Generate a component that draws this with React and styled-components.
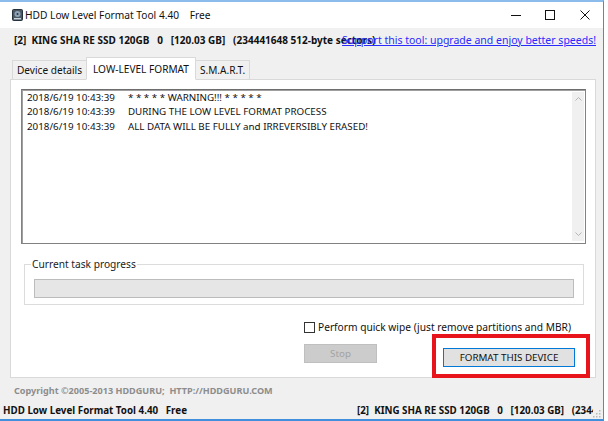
import React, { useState } from 'react';
import styled, { createGlobalStyle } from 'styled-components';

const GlobalStyle = createGlobalStyle`
  *, *::before, *::after {
    box-sizing: border-box;
  }
  body {
    margin: 0;
    background: #ffffff;
    font-family: 'Noto Sans', 'Open Sans', sans-serif;
  }
`;

const logLines = [
  ['2018/6/19 10:43:39', '* * * * *  WARNING!!! * * * * *'],
  ['2018/6/19 10:43:39', 'DURING THE LOW LEVEL FORMAT PROCESS'],
  ['2018/6/19 10:43:39', 'ALL DATA WILL BE FULLY and IRREVERSIBLY ERASED!'],
];

const deviceText = '[2]\u00a0\u00a0KING SHA RE SSD 120GB\u00a0\u00a0\u00a00\u00a0\u00a0\u00a0[120.03 GB]\u00a0\u00a0\u00a0(234441648 512-byte sectors)';

const DiskIcon = () => (
  <svg width="11" height="12" viewBox="0 0 11 12">
    <rect x="0.5" y="0.5" width="10" height="11" rx="1" fill="#4a5866" stroke="#27313b" />
    <circle cx="5.5" cy="5" r="3" fill="#8fa3b5" />
    <circle cx="5.5" cy="5" r="1" fill="#27313b" />
    <rect x="2" y="9" width="7" height="1.4" fill="#c9d3dc" />
  </svg>
);

const App = () => {
  const [tab, setTab] = useState('format');
  const [quick, setQuick] = useState(false);

  return (
    <>
      <GlobalStyle />
      <Window>
        <TitleBar>
          <DiskIcon />
          <Title>HDD Low Level Format Tool 4.40&nbsp;&nbsp;&nbsp;&nbsp;Free</Title>
          <Controls>
            <CtrlButton $w={34} aria-label="minimize">
              <svg width="10" height="10" viewBox="0 0 10 10"><path d="M0 5.5h10" stroke="#111" /></svg>
            </CtrlButton>
            <CtrlButton $w={34} aria-label="maximize">
              <svg width="10" height="10" viewBox="0 0 10 10"><rect x="0.5" y="0.5" width="9" height="9" fill="none" stroke="#111" /></svg>
            </CtrlButton>
            <CtrlButton $w={36} aria-label="close">
              <svg width="10" height="10" viewBox="0 0 10 10"><path d="M0.5 0.5l9 9M9.5 0.5l-9 9" stroke="#111" /></svg>
            </CtrlButton>
          </Controls>
        </TitleBar>

        <Body>
          <DeviceRow>
            <DeviceName>{deviceText}</DeviceName>
            <Upgrade href="#">Support this tool: upgrade and enjoy better speeds!</Upgrade>
          </DeviceRow>

          <Tabs>
            <Tab $active={tab === 'details'} onClick={() => setTab('details')}>Device details</Tab>
            <Tab $active={tab === 'format'} onClick={() => setTab('format')}>LOW-LEVEL FORMAT</Tab>
            <Tab $active={tab === 'smart'} onClick={() => setTab('smart')}>S.M.A.R.T.</Tab>
          </Tabs>

          <Panel>
            <LogBox>
              <LogList>
                {logLines.map(([time, msg], i) => (
                  <LogLine key={i}>
                    <span>{time}</span>
                    <span>{msg}</span>
                  </LogLine>
                ))}
              </LogList>
              <ScrollBar>
                <Arrow>
                  <svg width="7" height="5" viewBox="0 0 7 5"><path d="M0.5 4.5l3-3 3 3" stroke="#b5b5b5" fill="none" /></svg>
                </Arrow>
                <Arrow>
                  <svg width="7" height="5" viewBox="0 0 7 5"><path d="M0.5 0.5l3 3 3-3" stroke="#b5b5b5" fill="none" /></svg>
                </Arrow>
              </ScrollBar>
            </LogBox>

            <Group>
              <Legend>Current task progress</Legend>
              <Progress />
            </Group>

            <Actions>
              <CheckRow>
                <Check type="checkbox" checked={quick} onChange={(e) => setQuick(e.target.checked)} />
                Perform quick wipe (just remove partitions and MBR)
              </CheckRow>
              <ButtonRow>
                <Button disabled $w={73}>Stop</Button>
                <Highlight>
                  <Button $primary $w={132}>FORMAT THIS DEVICE</Button>
                </Highlight>
              </ButtonRow>
            </Actions>
          </Panel>

          <Copyright>Copyright ©2005-2013 HDDGURU;&nbsp;&nbsp;HTTP://HDDGURU.COM</Copyright>
        </Body>

        <StatusBar>
          <StatusLeft>HDD Low Level Format Tool 4.40&nbsp;&nbsp;&nbsp;Free</StatusLeft>
          <StatusRight>{deviceText}</StatusRight>
          <Grip>
            <svg width="8" height="8" viewBox="0 0 8 8">
              <g fill="#b9b9b9">
                <rect x="6" y="0" width="1.5" height="1.5" />
                <rect x="3" y="3" width="1.5" height="1.5" />
                <rect x="6" y="3" width="1.5" height="1.5" />
                <rect x="0" y="6" width="1.5" height="1.5" />
                <rect x="3" y="6" width="1.5" height="1.5" />
                <rect x="6" y="6" width="1.5" height="1.5" />
              </g>
            </svg>
          </Grip>
        </StatusBar>
      </Window>
    </>
  );
};

// Styled-components
const Window = styled.div`
  width: 604px;
  height: 421px;
  border-top: 2px solid #8cbcec;
  border-right: 1px solid #3f8fdc;
  border-bottom: 2px solid #3f8fdc;
  display: flex;
  flex-direction: column;
  background: #f0f0f0;
  overflow: hidden;
`;

const TitleBar = styled.div`
  height: 26px;
  flex-shrink: 0;
  display: flex;
  align-items: center;
  gap: 2px;
  padding-left: 12px;
  background: #ffffff;
`;

const Title = styled.span`
  font-size: 10.2px;
  color: #111;
  flex: 1;
  white-space: nowrap;
`;

const Controls = styled.div`
  display: flex;
  height: 100%;
`;

const CtrlButton = styled.div`
  width: ${(p) => p.$w}px;
  display: flex;
  align-items: center;
  justify-content: center;
`;

const Body = styled.div`
  flex: 1;
  display: flex;
  flex-direction: column;
  padding: 0 7px 0 10px;
`;

const DeviceRow = styled.div`
  display: grid;
  height: 24px;
  flex-shrink: 0;
  align-items: center;
  padding-left: 4px;
  white-space: nowrap;

  & > * {
    grid-area: 1 / 1;
  }
`;

const DeviceName = styled.span`
  font-size: 10px;
  font-weight: bold;
  color: #111;
`;

const Upgrade = styled.a`
  justify-self: end;
  color: #2a2aff;
  text-decoration: underline;
  font-size: 10.5px;
`;

const Tabs = styled.div`
  display: flex;
  align-items: flex-end;
  height: 28px;
  flex-shrink: 0;
  padding-left: 2px;
  margin-bottom: -1px;
  position: relative;
  z-index: 1;
`;

const Tab = styled.div`
  height: ${(p) => (p.$active ? '23px' : '20px')};
  padding: 0 ${(p) => (p.$active ? '6px' : '4px')};
  margin: 0 ${(p) => (p.$active ? '-1px' : '0')};
  display: flex;
  align-items: center;
  font-size: 10.1px;
  color: #111;
  background: ${(p) => (p.$active ? '#ffffff' : '#f0f0f0')};
  border: 1px solid #d9d9d9;
  border-bottom-color: ${(p) => (p.$active ? '#ffffff' : '#d9d9d9')};
  cursor: pointer;
  position: relative;
  z-index: ${(p) => (p.$active ? 2 : 1)};
`;

const Panel = styled.div`
  height: 299px;
  flex-shrink: 0;
  background: #ffffff;
  border: 1px solid #d9d9d9;
  padding: 9px 9px 0 10px;
  display: flex;
  flex-direction: column;
`;

const LogBox = styled.div`
  height: 155px;
  flex-shrink: 0;
  display: flex;
  border: 1px solid #828282;
  border-top-color: #6d6d6d;
  box-shadow: inset 1px 1px 0 #a0a0a0;
  background: #ffffff;
`;

const LogList = styled.div`
  flex: 1;
  padding: 0 0 0 5px;
`;

const LogLine = styled.div`
  display: flex;
  gap: 13px;
  height: 14.5px;
  align-items: center;
  font-size: 9.8px;
  color: #111;
  white-space: nowrap;
`;

const ScrollBar = styled.div`
  width: 12px;
  margin: 2px 1px 2px 0;
  background: #f0f0f0;
  display: flex;
  flex-direction: column;
  justify-content: space-between;
  align-items: center;
  padding: 4px 0;
`;

const Arrow = styled.div`
  display: flex;
`;

const Group = styled.fieldset`
  margin: 13px 2px 0 3px;
  padding: 8px 9px 6px 9px;
  border: 1px solid #dcdcdc;
  min-width: 0;
`;

const Legend = styled.legend`
  padding: 0 1px;
  margin-left: -3px;
  font-size: 10.2px;
  line-height: 14px;
  color: #222;
`;

const Progress = styled.div`
  height: 19px;
  background: #e6e6e6;
  border: 1px solid #bcbcbc;
`;

const Actions = styled.div`
  display: flex;
  flex-direction: column;
  align-items: flex-start;
  padding-left: 283px;
  margin-top: 16px;
`;

const CheckRow = styled.label`
  display: flex;
  align-items: center;
  gap: 3px;
  font-size: 10.2px;
  color: #111;
  white-space: nowrap;
  height: 12px;
`;

const Check = styled.input`
  appearance: none;
  width: 11px;
  height: 11px;
  margin: 0;
  border: 1px solid #333;
  background: #fff;
`;

const ButtonRow = styled.div`
  display: flex;
  align-items: flex-start;
  gap: 55px;
  margin-top: 11px;
`;

const Highlight = styled.div`
  border: 4px solid #e8141c;
  padding: 6px 11px 7px 7px;
  margin-top: -10px;
`;

const Button = styled.button`
  width: ${(p) => p.$w}px;
  height: 19px;
  font-family: inherit;
  font-size: 9.8px;
  padding: 0;
  color: ${(p) => (p.disabled ? '#a3a3a3' : '#111')};
  background: ${(p) => (p.disabled ? '#cccccc' : '#e1e1e1')};
  border: ${(p) => (p.$primary ? '1px solid #0078d7' : '1px solid #bfbfbf')};
  box-shadow: ${(p) => (p.$primary ? 'inset 0 0 0 1px #e1e1e1' : 'none')};
`;

const Copyright = styled.div`
  height: 24px;
  flex-shrink: 0;
  display: flex;
  align-items: center;
  padding-left: 4px;
  font-size: 9.1px;
  font-weight: bold;
  color: #8d8d8d;
`;

const StatusBar = styled.div`
  height: 17px;
  flex-shrink: 0;
  display: flex;
  align-items: center;
  padding-left: 3px;
  background: #f0f0f0;
  font-size: 9.8px;
  font-weight: bold;
  color: #111;
  white-space: nowrap;
`;

const StatusLeft = styled.div`
  width: 351px;
  flex-shrink: 0;
`;

const StatusRight = styled.div`
  flex: 1;
  overflow: hidden;
  padding-left: 3px;
`;

const Grip = styled.div`
  width: 10px;
  display: flex;
  align-self: flex-end;
  padding-bottom: 1px;
`;

export default App;
